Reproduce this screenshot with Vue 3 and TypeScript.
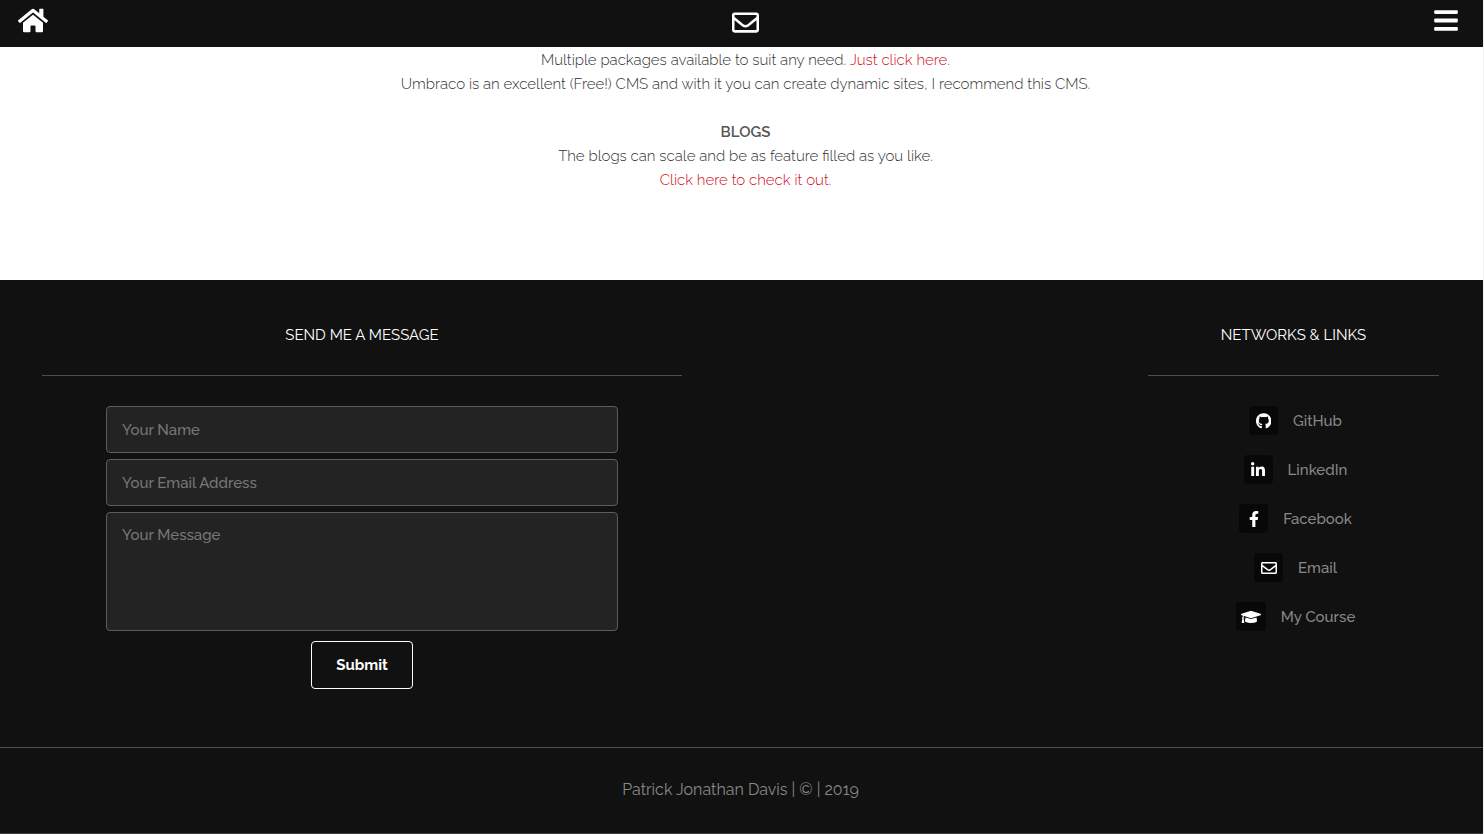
<script setup lang="ts">
import { ref } from 'vue'

interface NetworkLink {
  label: string
  width: number
  path: string
}

const envelope =
  'M464 64H48C21.49 64 0 85.49 0 112v288c0 26.51 21.49 48 48 48h416c26.51 0 48-21.49 48-48V112c0-26.51-21.49-48-48-48zm0 48v40.805c-22.422 18.259-58.168 46.651-134.587 106.49-16.841 13.247-50.201 45.072-73.413 44.701-23.208.375-56.579-31.459-73.413-44.701C106.18 199.465 70.425 171.067 48 152.805V112h416zM48 400V214.398c22.914 18.251 55.409 43.862 104.938 82.646 21.857 17.205 60.134 55.186 103.062 54.955 42.717.231 80.509-37.199 103.053-54.947 49.528-38.783 82.032-64.401 104.947-82.653V400H48z'

const links: NetworkLink[] = [
  {
    label: 'GitHub',
    width: 496,
    path: 'M244.8 8C106.1 8 0 113.3 0 252c0 110.9 69.8 205.8 169.5 239.2 12.8 2.3 17.3-5.6 17.3-12.1 0-6.2-.3-40.4-.3-61.4 0 0-70 15-84.7-29.8 0 0-11.4-29.1-27.8-36.6 0 0-22.9-15.7 1.6-15.4 0 0 24.9 2 38.6 25.8 21.9 38.6 58.6 27.5 72.9 20.9 2.3-16 8.8-27.1 16-33.7-55.9-6.2-112.3-14.3-112.3-110.5 0-27.5 7.6-41.3 23.6-58.9-2.6-6.5-11.1-33.3 2.6-67.9 20.9-6.5 69 27 69 27 20-5.6 41.5-8.5 62.8-8.5s42.8 2.9 62.8 8.5c0 0 48.1-33.6 69-27 13.7 34.7 5.2 61.4 2.6 67.9 16 17.7 25.8 31.5 25.8 58.9 0 96.5-58.9 104.2-114.8 110.5 9.2 7.9 17 22.9 17 46.4 0 33.7-.3 75.4-.3 83.6 0 6.5 4.6 14.4 17.3 12.1C428.2 457.8 496 362.9 496 252 496 113.3 383.5 8 244.8 8z',
  },
  {
    label: 'LinkedIn',
    width: 448,
    path: 'M100.28 448H7.4V148.9h92.88zM53.79 108.1C24.09 108.1 0 83.5 0 53.8a53.79 53.79 0 0 1 107.58 0c0 29.7-24.1 54.3-53.79 54.3zM447.9 448h-92.68V302.4c0-34.7-.7-79.2-48.29-79.2-48.29 0-55.69 37.7-55.69 76.7V448h-92.78V148.9h89.08v40.8h1.3c12.4-23.5 42.69-48.3 87.88-48.3 94 0 111.28 61.9 111.28 142.3V448z',
  },
  {
    label: 'Facebook',
    width: 320,
    path: 'M279.14 288l14.22-92.66h-88.91v-60.13c0-25.35 12.42-50.06 52.24-50.06h40.42V6.26S260.43 0 225.36 0c-73.22 0-121.08 44.38-121.08 124.72v70.62H22.89V288h81.39v224h100.17V288z',
  },
  { label: 'Email', width: 512, path: envelope },
  {
    label: 'My Course',
    width: 640,
    path: 'M622.34 153.2L343.4 67.5c-15.2-4.67-31.6-4.67-46.79 0L17.66 153.2c-23.54 7.23-23.54 38.36 0 45.59l48.63 14.94c-10.67 13.19-17.23 29.28-17.88 46.9C38.78 266.15 32 276.11 32 288c0 10.78 5.68 19.85 13.86 25.65L20.33 428.53C18.11 438.52 25.71 448 35.94 448h56.11c10.24 0 17.84-9.48 15.62-19.47L82.14 313.65C90.32 307.85 96 298.78 96 288c0-11.57-6.47-21.25-15.66-26.87.76-15.02 8.44-28.3 20.69-36.72L296.6 284.5c9.06 2.78 26.44 6.25 46.79 0l278.95-85.7c23.55-7.24 23.55-38.36 0-45.6zM352.79 315.09c-28.53 8.76-52.84 3.92-65.59 0l-145.02-44.55L128 384c0 35.35 85.96 64 192 64s192-28.65 192-64l-14.18-113.47-145.03 44.56z',
  },
]

const name = ref('')
const email = ref('')
const message = ref('')
</script>

<template>
  <div class="page">
    <header class="topbar">
      <a class="nav-icon" href="#" aria-label="Home">
        <svg viewBox="0 0 576 512" width="30" height="27" aria-hidden="true">
          <path d="M280.37 148.26L96 300.11V464a16 16 0 0 0 16 16l112.06-.29a16 16 0 0 0 15.92-16V368a16 16 0 0 1 16-16h64a16 16 0 0 1 16 16v95.64a16 16 0 0 0 16 16.05L464 480a16 16 0 0 0 16-16V300L295.67 148.26a12.19 12.19 0 0 0-15.3 0zM571.6 251.47L488 182.56V44.05a12 12 0 0 0-12-12h-56a12 12 0 0 0-12 12v72.61L318.47 43a48 48 0 0 0-61 0L4.34 251.47a12 12 0 0 0-1.6 16.9l25.5 31A12 12 0 0 0 45.15 301l235.22-193.74a12.19 12.19 0 0 1 15.3 0L530.9 301a12 12 0 0 0 16.9-1.6l25.5-31a12 12 0 0 0-1.7-16.93z" />
        </svg>
      </a>
      <a class="nav-icon nav-mail" href="#contact" aria-label="Contact">
        <svg viewBox="0 0 512 512" width="27" height="27" aria-hidden="true"><path :d="envelope" /></svg>
      </a>
      <button class="nav-icon nav-menu" type="button" aria-label="Menu">
        <svg viewBox="0 0 448 512" width="24" height="27" aria-hidden="true">
          <path d="M16 132h416c8.837 0 16-7.163 16-16V76c0-8.837-7.163-16-16-16H16C7.163 60 0 67.163 0 76v40c0 8.837 7.163 16 16 16zm0 160h416c8.837 0 16-7.163 16-16v-40c0-8.837-7.163-16-16-16H16c-8.837 0-16 7.163-16 16v40c0 8.837 7.163 16 16 16zm0 160h416c8.837 0 16-7.163 16-16v-40c0-8.837-7.163-16-16-16H16c-8.837 0-16 7.163-16 16v40c0 8.837 7.163 16 16 16z" />
        </svg>
      </button>
    </header>

    <main class="content">
      <p>
        Multiple packages available to suit any need. <a href="#">Just click here.</a><br />
        Umbraco is an excellent (Free!) CMS and with it you can create dynamic sites, I recommend this CMS.
      </p>
      <h3>BLOGS</h3>
      <p>
        The blogs can scale and be as feature filled as you like.<br />
        <a href="#">Click here to check it out.</a>
      </p>
    </main>

    <footer id="contact" class="footer">
      <div class="columns">
        <section class="message">
          <h2>SEND ME A MESSAGE</h2>
          <form class="form" @submit.prevent>
            <input v-model="name" type="text" placeholder="Your Name" aria-label="Your Name" />
            <input v-model="email" type="email" placeholder="Your Email Address" aria-label="Your Email Address" />
            <textarea v-model="message" placeholder="Your Message" aria-label="Your Message"></textarea>
            <button class="submit" type="submit">Submit</button>
          </form>
        </section>
        <section class="networks">
          <h2>NETWORKS &amp; LINKS</h2>
          <ul>
            <li v-for="link in links" :key="link.label">
              <a href="#">
                <span class="badge">
                  <svg :viewBox="`0 0 ${link.width} 512`" :width="link.width / 32" height="16" aria-hidden="true">
                    <path :d="link.path" />
                  </svg>
                </span>
                <span>{{ link.label }}</span>
              </a>
            </li>
          </ul>
        </section>
      </div>
      <p class="copyright">Patrick Jonathan Davis | © | 2019</p>
    </footer>
  </div>
</template>

<style>
body {
  margin: 0;
  background: #fff;
}
</style>

<style scoped>
.page {
  border-right: 1px solid #f1f1f1;
  font-family: Raleway, Lato, "Open Sans", sans-serif;
  font-size: 15px;
  line-height: 24px;
}

.page *,
.page {
  box-sizing: border-box;
}

.topbar {
  display: grid;
  grid-template-columns: 1fr auto 1fr;
  align-items: start;
  height: 47px;
  padding: 7px 25px 0 18px;
  background: #111;
}

.nav-icon {
  display: block;
  justify-self: start;
  padding: 0;
  border: 0;
  background: none;
  color: #fff;
  line-height: 0;
  cursor: pointer;
}

.nav-mail {
  margin-left: 14px;
  padding-top: 2px;
}

.nav-menu {
  justify-self: end;
}

svg {
  display: block;
  fill: currentColor;
}

.content {
  padding: 1px 0 88px 8px;
  color: #333;
  font-weight: 300;
  text-align: center;
}

.content p {
  margin: 0;
}

.content h3 {
  margin: 24px 0 0;
  color: #555;
  font-size: 15px;
  font-weight: 600;
}

.content a {
  color: #cf1023;
  text-decoration: none;
}

.footer {
  border-bottom: 1px solid #3c3c3c;
  background: #111;
  color: #888;
}

.columns {
  display: flex;
  justify-content: space-between;
  padding: 43px 44px 58px 42px;
  border-bottom: 1px solid #4d4d4d;
}

.message {
  width: 46%;
  max-width: 640px;
}

.networks {
  width: 21%;
  max-width: 291px;
}

h2 {
  margin: 0 0 30px;
  padding-bottom: 28px;
  border-bottom: 1px solid #4d4d4d;
  color: #fff;
  font-size: 15px;
  font-weight: 400;
  text-align: center;
}

.form {
  display: flex;
  flex-direction: column;
  gap: 6px;
  width: 80%;
  margin: 0 auto;
}

input,
textarea {
  display: block;
  width: 100%;
  height: 47px;
  margin: 0;
  padding: 0 15px;
  border: 1px solid #5c5c5c;
  border-radius: 4px;
  outline: none;
  background: #232323;
  color: #fff;
  font: inherit;
  font-weight: 500;
}

textarea {
  height: 119px;
  padding-top: 10px;
  resize: none;
}

input::placeholder,
textarea::placeholder {
  color: #777;
  opacity: 1;
}

.submit {
  align-self: center;
  height: 48px;
  margin-top: 4px;
  padding: 0 24px;
  border: 1px solid #fff;
  border-radius: 4px;
  background: transparent;
  color: #fff;
  font: inherit;
  font-weight: 700;
  cursor: pointer;
}

ul {
  display: flex;
  flex-direction: column;
  align-items: center;
  gap: 20px;
  margin: 0;
  padding: 0 0 0 4px;
  list-style: none;
}

li a {
  display: flex;
  align-items: center;
  gap: 15px;
  color: #888;
  font-weight: 500;
  text-decoration: none;
}

.badge {
  display: grid;
  place-items: center;
  min-width: 29px;
  height: 29px;
  padding: 0 5px;
  border-radius: 4px;
  background: #080808;
  color: #fff;
}

.copyright {
  margin: 0;
  padding: 30px 2px 31px 0;
  font-size: 16px;
  text-align: center;
}
</style>
